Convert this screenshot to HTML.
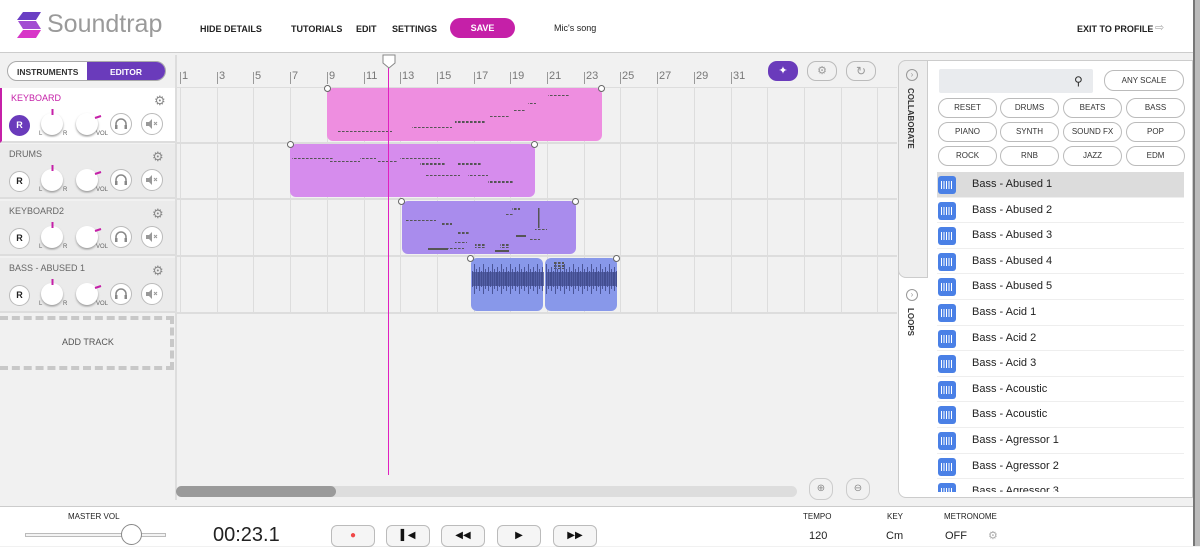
<!DOCTYPE html>
<html><head><meta charset="utf-8"><style>
*{box-sizing:border-box;margin:0;padding:0}
body{width:1200px;height:546px;overflow:hidden;background:#f1f1f1;font-family:"Liberation Sans",sans-serif;position:relative;color:#333}
.a{position:absolute}
.hdr{left:0;top:0;width:1193px;height:53px;background:#fff;border-bottom:1px solid #ccc}
.nav{font-size:9px;font-weight:bold;color:#222;top:24px}
.grid{top:88px;width:1px;height:224px;background:#ddd}
.tick{top:72px;width:1px;height:12px;background:#999}
.num{top:70px;font-size:11px;color:#777}
.trk{left:0;width:175px;height:55px;background:#ebebeb;border-bottom:2px solid #ddd}
.tn{position:absolute;left:9px;top:5px;font-size:9px;color:#666}
.gear{position:absolute;left:152px;top:5px;font-size:13px;color:#888}
.cb{position:absolute;top:27px;width:21px;height:21px;border:1px solid #bbb;border-radius:50%;background:#fff;font-size:9px;font-weight:bold;text-align:center;line-height:19px;color:#222}
.clip{position:absolute;border-radius:6px}
.hd{position:absolute;width:7px;height:7px;border:1px solid #666;border-radius:50%;background:#fff}
.tag{position:absolute;width:59px;height:20px;border:1px solid #bbb;border-radius:10px;font-size:8px;text-align:center;line-height:18px;color:#333;background:#fff}
.li{position:absolute;left:937px;width:247px;height:25.6px;border-bottom:1px solid #eee;font-size:11px;color:#222}
.li i{position:absolute;left:1px;top:4px;width:18px;height:18px;background:#4a80e6;border-radius:3px}
.li i:after{content:"";position:absolute;left:3px;top:5px;width:12px;height:8px;background:repeating-linear-gradient(90deg,#fff 0 1.2px,transparent 1.2px 2.5px)}
.li span{position:absolute;left:35px;top:6px}
.tb{position:absolute;top:525px;width:44px;height:22px;border:1px solid #bbb;border-radius:6px;background:#f5f5f5;text-align:center;font-size:10px;line-height:20px;color:#111}
.fl{position:absolute;top:512px;font-size:8px;color:#222}
.fv{position:absolute;top:530px;font-size:11px;color:#222}
</style></head><body>
<div class="a hdr"></div>
<svg class="a" style="left:17px;top:12px" width="25" height="27"><path d="M6 0H24L19 8H0Z" fill="#6a3fc4"/><path d="M1 9H19L24 17H6Z" fill="#a24dd2"/><path d="M6 18H24L19 26H0Z" fill="#d836c8"/></svg>
<div class="a" style="left:47px;top:10px;font-size:25px;color:#9a9a9a">Soundtrap</div>
<div class="a nav" style="left:200px">HIDE DETAILS</div>
<div class="a nav" style="left:291px">TUTORIALS</div>
<div class="a nav" style="left:356px">EDIT</div>
<div class="a nav" style="left:392px">SETTINGS</div>
<div class="a" style="left:450px;top:18px;width:65px;height:20px;border-radius:10px;background:#c520a8;color:#fff;font-size:9px;font-weight:bold;text-align:center;line-height:20px">SAVE</div>
<div class="a" style="left:554px;top:23px;font-size:9px;color:#222">Mic's song</div>
<div class="a nav" style="left:1077px">EXIT TO PROFILE</div>
<div class="a" style="left:1155px;top:21px;font-size:11px;color:#aaa">⇨</div>
<div class="a" style="left:1193px;top:0;width:7px;height:546px;background:#bbb"></div>
<div class="a" style="left:1193px;top:0;width:2px;height:546px;background:#777"></div>

<div class="a" style="left:7px;top:61px;width:159px;height:20px;border:1px solid #aaa;border-radius:10px;background:#fff;overflow:hidden">
<div class="a" style="left:79px;top:0;width:80px;height:20px;background:#6a3bbb"></div>
<div class="a" style="left:9px;top:5px;font-size:8.5px;font-weight:bold;color:#333">INSTRUMENTS</div>
<div class="a" style="left:102px;top:5px;font-size:8.5px;font-weight:bold;color:#fff">EDITOR</div>
</div>

<div class="a" style="left:175px;top:55px;width:2px;height:445px;background:#ddd"></div>
<div class="a" style="left:177px;top:87px;width:720px;height:1px;background:#ddd"></div>
<div class="a grid" style="left:180px"></div><div class="a grid" style="left:217px"></div><div class="a grid" style="left:253px"></div><div class="a grid" style="left:290px"></div><div class="a grid" style="left:327px"></div><div class="a grid" style="left:364px"></div><div class="a grid" style="left:400px"></div><div class="a grid" style="left:437px"></div><div class="a grid" style="left:474px"></div><div class="a grid" style="left:510px"></div><div class="a grid" style="left:547px"></div><div class="a grid" style="left:584px"></div><div class="a grid" style="left:620px"></div><div class="a grid" style="left:657px"></div><div class="a grid" style="left:694px"></div><div class="a grid" style="left:731px"></div><div class="a grid" style="left:767px"></div><div class="a grid" style="left:804px"></div><div class="a grid" style="left:841px"></div><div class="a grid" style="left:877px"></div>
<div class="a tick" style="left:180px"></div><div class="a num" style="left:182px">1</div>
<div class="a tick" style="left:217px"></div><div class="a num" style="left:219px">3</div>
<div class="a tick" style="left:253px"></div><div class="a num" style="left:255px">5</div>
<div class="a tick" style="left:290px"></div><div class="a num" style="left:292px">7</div>
<div class="a tick" style="left:327px"></div><div class="a num" style="left:329px">9</div>
<div class="a tick" style="left:364px"></div><div class="a num" style="left:366px">11</div>
<div class="a tick" style="left:400px"></div><div class="a num" style="left:402px">13</div>
<div class="a tick" style="left:437px"></div><div class="a num" style="left:439px">15</div>
<div class="a tick" style="left:474px"></div><div class="a num" style="left:476px">17</div>
<div class="a tick" style="left:510px"></div><div class="a num" style="left:512px">19</div>
<div class="a tick" style="left:547px"></div><div class="a num" style="left:549px">21</div>
<div class="a tick" style="left:584px"></div><div class="a num" style="left:586px">23</div>
<div class="a tick" style="left:620px"></div><div class="a num" style="left:622px">25</div>
<div class="a tick" style="left:657px"></div><div class="a num" style="left:659px">27</div>
<div class="a tick" style="left:694px"></div><div class="a num" style="left:696px">29</div>
<div class="a tick" style="left:731px"></div><div class="a num" style="left:733px">31</div>
<div class="a" style="left:177px;top:142px;width:720px;height:2px;background:#ddd"></div>
<div class="a" style="left:177px;top:198px;width:720px;height:2px;background:#ddd"></div>
<div class="a" style="left:177px;top:255px;width:720px;height:2px;background:#ddd"></div>
<div class="a" style="left:177px;top:312px;width:720px;height:2px;background:#ddd"></div>
<div class="a" style="left:768px;top:61px;width:30px;height:20px;border-radius:9px;background:#6a3bbb;color:#fff;text-align:center;font-size:11px;line-height:20px">✦</div>
<div class="a" style="left:807px;top:61px;width:30px;height:20px;border-radius:9px;border:1px solid #bbb;color:#999;text-align:center;font-size:11px;line-height:18px">⚙</div>
<div class="a" style="left:846px;top:61px;width:30px;height:20px;border-radius:9px;border:1px solid #bbb;color:#999;text-align:center;font-size:12px;line-height:18px">↻</div>

<div class="clip" style="left:327px;top:88px;width:275px;height:53px;background:#ee8ee0"></div>
<div class="clip" style="left:290px;top:144px;width:245px;height:53px;background:#d68ced"></div>
<div class="clip" style="left:402px;top:201px;width:174px;height:53px;background:#a98ced"></div>
<div class="clip" style="left:471px;top:258px;width:72px;height:53px;background:#8898ea"></div>
<div class="clip" style="left:545px;top:258px;width:72px;height:53px;background:#8898ea"></div>
<svg class="a" style="left:290px;top:88px" width="330" height="225">
<defs>
<pattern id="d" width="4" height="3" patternUnits="userSpaceOnUse"><rect width="2.6" height="2" fill="#555"/></pattern>
<pattern id="w" x="0" y="171" width="9" height="40" patternUnits="userSpaceOnUse"><g stroke="#4a5598" stroke-width="1"><line x1="0.5" y1="8" x2="0.5" y2="32"/><line x1="2.5" y1="12" x2="2.5" y2="28"/><line x1="4.5" y1="5" x2="4.5" y2="35"/><line x1="6.5" y1="10" x2="6.5" y2="30"/><line x1="8.5" y1="13" x2="8.5" y2="27"/></g></pattern>
</defs>
<g fill="url(#d)">
<rect x="48" y="43" width="54" height="2"/><rect x="122" y="38" width="40" height="2"/><rect x="165" y="33" width="30" height="2"/><rect x="200" y="28" width="20" height="2"/><rect x="224" y="22" width="12" height="2"/><rect x="258" y="7" width="22" height="2"/><rect x="238" y="14" width="8" height="2"/>
<rect x="2" y="70" width="42" height="2"/><rect x="40" y="73" width="30" height="2"/><rect x="70" y="70" width="16" height="2"/><rect x="88" y="73" width="20" height="2"/><rect x="110" y="70" width="40" height="2"/><rect x="130" y="75" width="26" height="2"/><rect x="168" y="75" width="24" height="2"/><rect x="135" y="86" width="35" height="2"/><rect x="178" y="86" width="8" height="2"/><rect x="188" y="86" width="10" height="2"/><rect x="198" y="93" width="26" height="2"/>
<rect x="116" y="131" width="30" height="2"/><rect x="152" y="135" width="10" height="2"/><rect x="168" y="144" width="12" height="2"/><rect x="210" y="156" width="10" height="4"/><rect x="245" y="140" width="12" height="2"/><rect x="264" y="173" width="10" height="8"/><rect x="215" y="125" width="8" height="2"/><rect x="222" y="120" width="8" height="2"/>
<rect x="165" y="154" width="12" height="2"/><rect x="158" y="160" width="16" height="2"/><rect x="185" y="156" width="10" height="4"/><rect x="240" y="151" width="10" height="2"/>
</g>
<rect x="138" y="160" width="20" height="2" fill="#555"/><rect x="205" y="162" width="14" height="2" fill="#555"/><rect x="226" y="147" width="10" height="2" fill="#555"/><rect x="248" y="120" width="1.5" height="20" fill="#555"/>
<rect x="182" y="171" width="72" height="40" fill="url(#w)"/><rect x="256" y="171" width="71" height="40" fill="url(#w)"/>
<rect x="182" y="184" width="72" height="14" fill="#414c8f" opacity=".75"/><rect x="256" y="184" width="71" height="14" fill="#414c8f" opacity=".75"/>
</svg>
<div class="hd" style="left:324px;top:85px"></div><div class="hd" style="left:598px;top:85px"></div>
<div class="hd" style="left:287px;top:141px"></div><div class="hd" style="left:531px;top:141px"></div>
<div class="hd" style="left:398px;top:198px"></div><div class="hd" style="left:572px;top:198px"></div>
<div class="hd" style="left:467px;top:255px"></div><div class="hd" style="left:613px;top:255px"></div>
<div class="a" style="left:388px;top:62px;width:1px;height:413px;background:#e020c0"></div>
<svg class="a" style="left:382px;top:54px" width="14" height="15"><path d="M1 1H13V9L7 14L1 9Z" fill="#fff" stroke="#888"/></svg>

<div class="a trk" style="top:88px;background:#fff;border-left:2px solid #c520a8"><div class="tn" style="color:#c520a8">KEYBOARD</div><div class="gear">⚙</div>
<div class="cb" style="left:7px;background:#6a3bbb;color:#fff;border-color:#6a3bbb">R</div></div>
<div class="a trk" style="top:144px"><div class="tn">DRUMS</div><div class="gear">⚙</div><div class="cb" style="left:9px">R</div></div>
<div class="a trk" style="top:201px"><div class="tn">KEYBOARD2</div><div class="gear">⚙</div><div class="cb" style="left:9px">R</div></div>
<div class="a trk" style="top:258px"><div class="tn">BASS - ABUSED 1</div><div class="gear">⚙</div><div class="cb" style="left:9px">R</div></div>
<svg class="a" style="left:0;top:88px" width="175" height="225">
<defs><filter id="sh"><feDropShadow dx="0" dy="1.5" stdDeviation="1" flood-color="#999"/></filter></defs>
<g id="k"><circle cx="52" cy="36" r="11" fill="#fff" filter="url(#sh)"/><rect x="51.5" y="21" width="2" height="6" fill="#c520a8"/><circle cx="87" cy="36" r="11" fill="#fff" filter="url(#sh)"/><path d="M95 30L101 28" stroke="#c520a8" stroke-width="2"/>
<circle cx="121" cy="36" r="10.5" fill="#fff" stroke="#bbb"/><path d="M116 40v-4a5 5 0 0 1 10 0v4" stroke="#888" fill="none" stroke-width="1.5"/><rect x="115" y="37" width="2.5" height="4" fill="#888"/><rect x="124.5" y="37" width="2.5" height="4" fill="#888"/>
<circle cx="152" cy="36" r="10.5" fill="#fff" stroke="#bbb"/><path d="M146 34h3l3-3v10l-3-3h-3z" fill="#999"/><path d="M154 34l3 3M157 34l-3 3" stroke="#999"/><text x="39" y="47" font-size="6" fill="#666">L</text><text x="63" y="47" font-size="6" fill="#666">R</text><text x="96" y="47" font-size="6" fill="#666">VOL</text></g>
<use href="#k" y="56"/><use href="#k" y="113"/><use href="#k" y="170"/>
</svg>
<div class="a" style="left:0;top:316px;width:174px;height:54px;border:4px dashed #c8c8c8;border-left:none"></div>
<div class="a" style="left:62px;top:337px;font-size:9px;color:#555">ADD TRACK</div>

<div class="a" style="left:176px;top:486px;width:621px;height:11px;border-radius:6px;background:#ddd"></div>
<div class="a" style="left:176px;top:486px;width:160px;height:11px;border-radius:6px;background:#9a9a9a"></div>
<div class="a" style="left:809px;top:478px;width:24px;height:22px;border:1px solid #ccc;border-radius:9px;font-size:10px;text-align:center;line-height:20px;color:#888">⊕</div>
<div class="a" style="left:846px;top:478px;width:24px;height:22px;border:1px solid #ccc;border-radius:9px;font-size:10px;text-align:center;line-height:20px;color:#888">⊖</div>

<div class="a" style="left:898px;top:60px;width:295px;height:438px;background:#fff;border:1px solid #ccc;border-radius:8px 0 0 8px"></div>
<div class="a" style="left:898px;top:60px;width:30px;height:218px;background:#eee;border:1px solid #ccc;border-radius:8px 0 0 8px"></div>
<div class="a" style="left:906px;top:69px;width:12px;height:12px;border:1px solid #999;border-radius:50%;font-size:8px;color:#999;text-align:center;line-height:10px">›</div>
<div class="a" style="left:906px;top:88px;font-size:8px;font-weight:bold;color:#333;writing-mode:vertical-rl">COLLABORATE</div>
<div class="a" style="left:906px;top:289px;width:12px;height:12px;border:1px solid #999;border-radius:50%;font-size:8px;color:#999;text-align:center;line-height:10px">›</div>
<div class="a" style="left:906px;top:308px;font-size:8px;font-weight:bold;color:#333;writing-mode:vertical-rl">LOOPS</div>
<div class="a" style="left:939px;top:69px;width:154px;height:24px;background:#e9ebee;border-radius:2px"></div>
<div class="a" style="left:1074px;top:74px;font-size:12px;color:#333">⚲</div>
<div class="tag" style="left:1104px;top:70px;width:80px;height:21px;line-height:19px">ANY SCALE</div>
<div class="tag" style="left:938px;top:98px">RESET</div><div class="tag" style="left:1000px;top:98px">DRUMS</div><div class="tag" style="left:1063px;top:98px">BEATS</div><div class="tag" style="left:1126px;top:98px">BASS</div>
<div class="tag" style="left:938px;top:122px">PIANO</div><div class="tag" style="left:1000px;top:122px">SYNTH</div><div class="tag" style="left:1063px;top:122px">SOUND FX</div><div class="tag" style="left:1126px;top:122px">POP</div>
<div class="tag" style="left:938px;top:146px">ROCK</div><div class="tag" style="left:1000px;top:146px">RNB</div><div class="tag" style="left:1063px;top:146px">JAZZ</div><div class="tag" style="left:1126px;top:146px">EDM</div>
<div class="a" style="left:937px;top:172px;width:247px;height:320px;overflow:hidden">
<div class="li" style="left:0;top:0;background:#dcdcdc"><i></i><span>Bass - Abused 1</span></div>
<div class="li" style="left:0;top:25.6px"><i></i><span>Bass - Abused 2</span></div>
<div class="li" style="left:0;top:51.2px"><i></i><span>Bass - Abused 3</span></div>
<div class="li" style="left:0;top:76.8px"><i></i><span>Bass - Abused 4</span></div>
<div class="li" style="left:0;top:102.4px"><i></i><span>Bass - Abused 5</span></div>
<div class="li" style="left:0;top:128px"><i></i><span>Bass - Acid 1</span></div>
<div class="li" style="left:0;top:153.6px"><i></i><span>Bass - Acid 2</span></div>
<div class="li" style="left:0;top:179.2px"><i></i><span>Bass - Acid 3</span></div>
<div class="li" style="left:0;top:204.8px"><i></i><span>Bass - Acoustic</span></div>
<div class="li" style="left:0;top:230.4px"><i></i><span>Bass - Acoustic</span></div>
<div class="li" style="left:0;top:256px"><i></i><span>Bass - Agressor 1</span></div>
<div class="li" style="left:0;top:281.6px"><i></i><span>Bass - Agressor 2</span></div>
<div class="li" style="left:0;top:307.2px"><i></i><span>Bass - Agressor 3</span></div>
</div>

<div class="a" style="left:0;top:506px;width:1193px;height:40px;background:#fff;border-top:1px solid #ccc"></div>
<div class="fl" style="left:68px">MASTER VOL</div>
<div class="a" style="left:25px;top:533px;width:141px;height:4px;border:1px solid #bbb;background:#f3f3f3"></div>
<div class="a" style="left:121px;top:524px;width:21px;height:21px;border:1px solid #888;border-radius:50%;background:#fff"></div>
<div class="a" style="left:213px;top:524px;font-size:20px;color:#222">00:23.1</div>
<div class="tb" style="left:331px;color:#f04848">●</div>
<div class="tb" style="left:386px">▌◀</div>
<div class="tb" style="left:441px">◀◀</div>
<div class="tb" style="left:497px">▶</div>
<div class="tb" style="left:553px">▶▶</div>
<div class="fl" style="left:803px">TEMPO</div><div class="fv" style="left:809px">120</div>
<div class="fl" style="left:887px">KEY</div><div class="fv" style="left:886px">Cm</div>
<div class="fl" style="left:944px">METRONOME</div><div class="fv" style="left:945px">OFF</div>
<div class="a" style="left:988px;top:529px;font-size:11px;color:#aaa">⚙</div>
</body></html>
